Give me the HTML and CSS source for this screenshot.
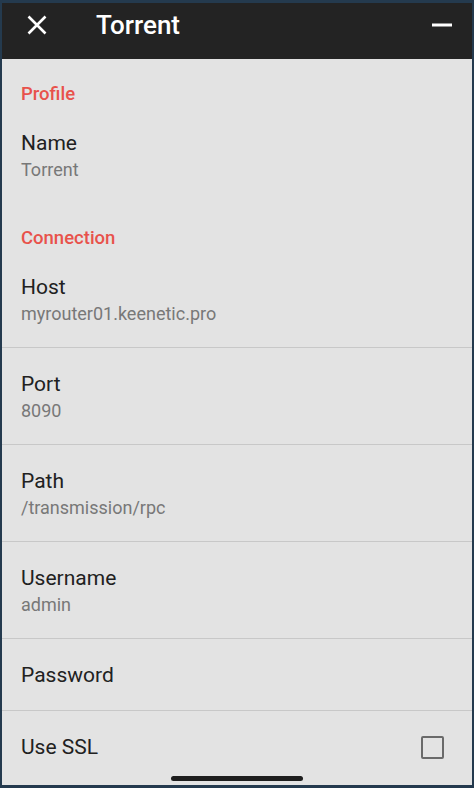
FILE: index.html
```html
<!DOCTYPE html>
<html>
<head>
<meta charset="utf-8">
<link rel="stylesheet" href="styles.css">
</head>
<body>
<div class="frame">
  <header class="appbar">
    <button class="icon-btn close" aria-label="Close">
      <svg width="22" height="22" viewBox="0 0 22 22"><path d="M2.5 2.5 L19.5 19.5 M19.5 2.5 L2.5 19.5" stroke="#fff" stroke-width="2.6" stroke-linecap="butt"/></svg>
    </button>
    <h1 class="title">Torrent</h1>
    <button class="icon-btn minus" aria-label="Remove">
      <svg width="20" height="4" viewBox="0 0 20 4"><rect x="0" y="0.5" width="20" height="3" fill="#fff"/></svg>
    </button>
  </header>
  <main class="content">
    <div class="section-header">Profile</div>
    <div class="item">
      <div class="item-title">Name</div>
      <div class="item-sub">Torrent</div>
    </div>
    <div class="section-header">Connection</div>
    <div class="item divided">
      <div class="item-title">Host</div>
      <div class="item-sub">myrouter01.keenetic.pro</div>
    </div>
    <div class="item divided">
      <div class="item-title">Port</div>
      <div class="item-sub">8090</div>
    </div>
    <div class="item divided">
      <div class="item-title">Path</div>
      <div class="item-sub">/transmission/rpc</div>
    </div>
    <div class="item divided">
      <div class="item-title">Username</div>
      <div class="item-sub">admin</div>
    </div>
    <div class="item divided">
      <div class="item-title">Password</div>
    </div>
    <div class="item check-row">
      <div class="item-title">Use SSL</div>
      <span class="checkbox"></span>
    </div>
  </main>
  <div class="home-indicator"></div>
</div>
</body>
</html>
```
FILE: styles.css
```css
html, body {
  margin: 0;
  padding: 0;
}
body {
  width: 474px;
  height: 788px;
  overflow: hidden;
  font-family: Roboto, "Noto Sans", "Liberation Sans", sans-serif;
  background: #243a4e;
}
.frame {
  position: relative;
  box-sizing: border-box;
  width: 474px;
  height: 788px;
  border-style: solid;
  border-color: #243a4e;
  border-width: 3px 2px 3px 2px;
  background: #e3e3e3;
  display: flex;
  flex-direction: column;
  overflow: hidden;
}
.appbar {
  height: 56px;
  background: #232323;
  display: flex;
  align-items: center;
  flex-shrink: 0;
}
.icon-btn {
  background: none;
  border: 0;
  padding: 0;
  display: flex;
  align-items: center;
  justify-content: center;
}
.close {
  width: 22px;
  height: 22px;
  margin-left: 24px;
  margin-top: -13px;
}
.title {
  margin: 0 0 0 48px;
  font-size: 26px;
  font-weight: 500;
  color: #ffffff;
  line-height: 30px;
  margin-top: -13px;
  flex: 1;
}
.minus {
  width: 20px;
  height: 4px;
  margin-right: 20px;
  margin-top: -13px;
}
.content {
  flex: 1;
  display: flex;
  flex-direction: column;
}
.section-header {
  padding: 23px 19px 1px;
  line-height: 24px;
  font-size: 18.5px;
  font-weight: 500;
  color: #e8524b;
}
.item {
  padding: 23px 19px 21px;
}
.item.divided {
  border-bottom: 1px solid #c8c8c8;
}
.item-title {
  font-size: 21px;
  line-height: 27px;
  color: #212121;
}
.item-sub {
  font-size: 18px;
  line-height: 25px;
  color: #787878;
}
.check-row {
  display: flex;
  align-items: center;
  justify-content: space-between;
  padding-right: 28px;
}
.checkbox {
  box-sizing: border-box;
  width: 23px;
  height: 23px;
  border: 2px solid #6a6a6a;
  border-radius: 2px;
}
.home-indicator {
  position: absolute;
  left: 169px;
  bottom: 4px;
  width: 132px;
  height: 5px;
  border-radius: 3px;
  background: #1e1e1e;
}
```
